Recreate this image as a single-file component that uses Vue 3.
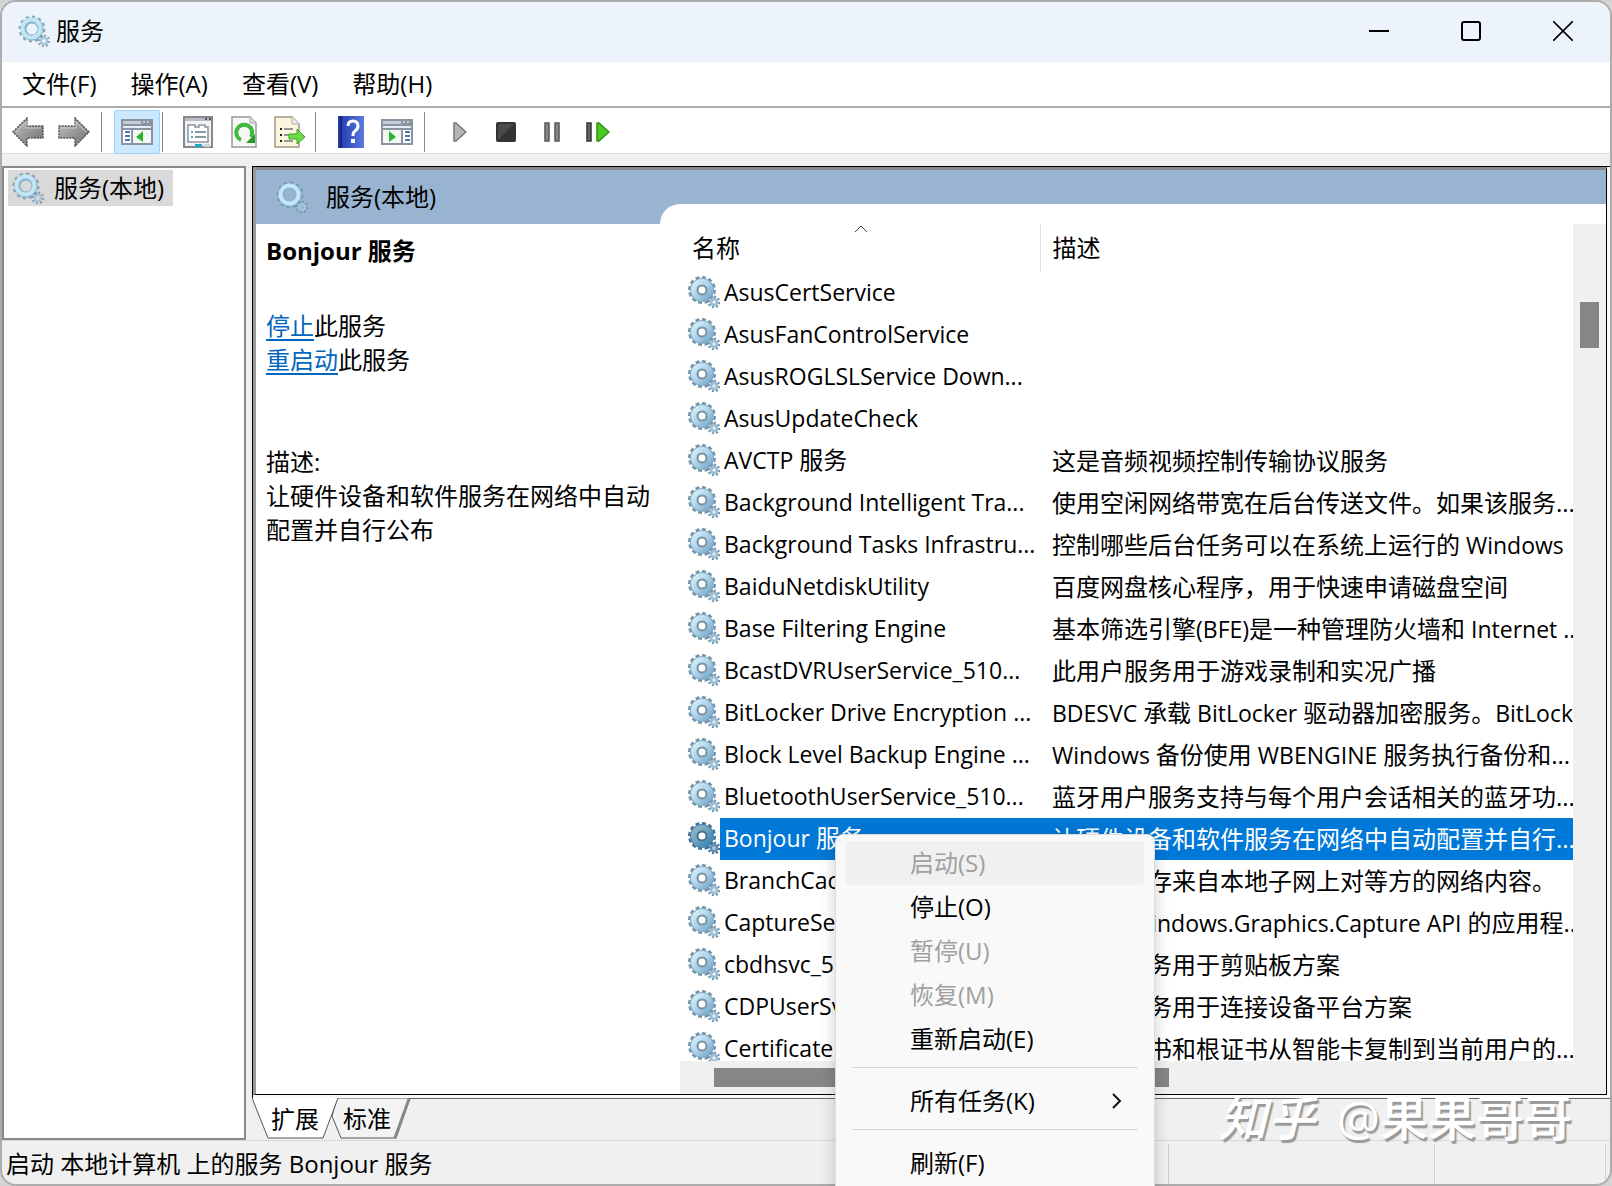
<script setup>
import { ref } from 'vue'

const menus = ['文件(F)', '操作(A)', '查看(V)', '帮助(H)']

const services = [
  { name: 'AsusCertService', desc: '' },
  { name: 'AsusFanControlService', desc: '' },
  { name: 'AsusROGLSLService Down...', desc: '' },
  { name: 'AsusUpdateCheck', desc: '' },
  { name: 'AVCTP 服务', desc: '这是音频视频控制传输协议服务' },
  { name: 'Background Intelligent Tra...', desc: '使用空闲网络带宽在后台传送文件。如果该服务...' },
  { name: 'Background Tasks Infrastru...', desc: '控制哪些后台任务可以在系统上运行的 Windows' },
  { name: 'BaiduNetdiskUtility', desc: '百度网盘核心程序，用于快速申请磁盘空间' },
  { name: 'Base Filtering Engine', desc: '基本筛选引擎(BFE)是一种管理防火墙和 Internet ...' },
  { name: 'BcastDVRUserService_510...', desc: '此用户服务用于游戏录制和实况广播' },
  { name: 'BitLocker Drive Encryption ...', desc: 'BDESVC 承载 BitLocker 驱动器加密服务。BitLocker' },
  { name: 'Block Level Backup Engine ...', desc: 'Windows 备份使用 WBENGINE 服务执行备份和...' },
  { name: 'BluetoothUserService_510...', desc: '蓝牙用户服务支持与每个用户会话相关的蓝牙功...' },
  { name: 'Bonjour 服务', desc: '让硬件设备和软件服务在网络中自动配置并自行...' },
  { name: 'BranchCache', desc: '此服务缓存来自本地子网上对等方的网络内容。' },
  { name: 'CaptureService_510...', desc: '为调用 Windows.Graphics.Capture API 的应用程...' },
  { name: 'cbdhsvc_510...', desc: '此用户服务用于剪贴板方案' },
  { name: 'CDPUserSvc_510...', desc: '此用户服务用于连接设备平台方案' },
  { name: 'Certificate Propagation', desc: '将用户证书和根证书从智能卡复制到当前用户的...' },
]
const selected = ref('Bonjour 服务')

// Splits a label into Latin and Chinese runs; Latin runs are set slightly smaller.
const runs = (text) =>
  (text.match(/[\x20-\x7e]+|[^\x20-\x7e]+/g) || []).map((t) => ({ t, latin: /[A-Za-z]/.test(t) }))

const contextMenu = [
  { label: '启动(S)', disabled: true, hover: true },
  { label: '停止(O)' },
  { label: '暂停(U)', disabled: true },
  { label: '恢复(M)', disabled: true },
  { label: '重新启动(E)' },
  { separator: true },
  { label: '所有任务(K)', submenu: true },
  { separator: true },
  { label: '刷新(F)' },
]
</script>

<template>
  <div class="desktop">
    <svg class="defs" aria-hidden="true">
      <defs>
        <linearGradient id="metal" x1="0" y1="0" x2="1" y2="1">
          <stop offset="0" stop-color="#c4c4c4" />
          <stop offset="1" stop-color="#6e6e6e" />
        </linearGradient>
        <linearGradient id="gearFill" x1="0" y1="0" x2="1" y2="1">
          <stop offset="0" stop-color="#d4edf9" />
          <stop offset="0.5" stop-color="#add2e9" />
          <stop offset="1" stop-color="#79abcc" />
        </linearGradient>
        <linearGradient id="helpFill" x1="0" y1="0" x2="1" y2="0">
          <stop offset="0" stop-color="#2238a0" />
          <stop offset="0.2" stop-color="#2a45b8" />
          <stop offset="1" stop-color="#5d7be0" />
        </linearGradient>
        <symbol id="gear" viewBox="0 0 32 32">
          <circle class="teeth" cx="14" cy="14" r="12" fill="none" stroke-width="4" pathLength="24" stroke-dasharray="1.200 .8" />
          <circle cx="14" cy="14" r="8" fill="none" stroke="#86a9c0" stroke-width="8" />
          <circle cx="14" cy="14" r="8" fill="none" stroke="url(#gearFill)" stroke-width="6" />
          <circle class="rim" cx="14" cy="14" r="4.500" fill="none" stroke-width="2" />
          <circle class="teeth" cx="26" cy="26" r="4.500" fill="none" stroke-width="4" pathLength="16" stroke-dasharray="1 1" />
          <circle cx="26" cy="26" r="3" fill="none" stroke="#9dbfd6" stroke-width="3" />
          <circle cx="26" cy="26" r="1" fill="#e3eef5" />
        </symbol>
        <symbol id="gear-light" viewBox="0 0 32 32">
          <circle class="teeth" cx="14" cy="14" r="12" fill="none" stroke-width="3" pathLength="24" stroke-dasharray="1 1" opacity=".8" />
          <circle cx="14" cy="14" r="8.500" fill="none" stroke="#86b3cf" stroke-width="6" />
          <circle cx="13.500" cy="13.500" r="9" fill="none" stroke="#c3e6f5" stroke-width="4" />
          <circle class="teeth" cx="26" cy="26" r="4.500" fill="none" stroke-width="4" pathLength="16" stroke-dasharray="1 1" opacity=".8" />
          <circle cx="26" cy="26" r="3" fill="none" stroke="#a5c5d8" stroke-width="2" />
        </symbol>
        <symbol id="console" viewBox="0 0 32 26">
          <path d="M0 0h32v26H0z" fill="#8a94a0" />
          <path d="M2 2h18v3H2zM22 2h2v2h-2zM26 2h2v2h-2z" fill="#c5cdd8" />
          <path d="M2 7h28v2H2z" fill="#e6edf4" />
          <path d="M2 11h8v13H2z" fill="#fff" />
          <path d="M12 11h18v13H12z" fill="#f4f8f4" />
          <path d="M4 12h5v2H4zM4 16h5v2H4zM4 20h5v2H4z" fill="#4a78b4" />
        </symbol>
      </defs>
    </svg>

    <main class="window">
      <header class="titlebar">
        <svg class="gear-icon"><use href="#gear-light" /></svg>
        <h1>服务</h1>
        <div class="captions">
          <button aria-label="最小化"><svg width="20" height="20"><path d="M0 10h20" stroke="#000" stroke-width="2" /></svg></button>
          <button aria-label="最大化"><svg width="20" height="20"><rect x="1" y="1" width="18" height="18" rx="2" fill="none" stroke="#000" stroke-width="2" /></svg></button>
          <button aria-label="关闭"><svg width="20" height="20"><path d="M0 0l20 20M20 0L0 20" stroke="#000" stroke-width="1.6" /></svg></button>
        </div>
      </header>

      <nav class="menubar">
        <button v-for="m in menus" :key="m">{{ m }}</button>
      </nav>

      <div class="toolbar" role="toolbar">
        <div class="group nav">
          <button aria-label="后退">
            <svg width="32" height="30" viewBox="0 0 32 30"><path d="M1 15L15 1v8h16v12H15v8z" fill="url(#metal)" stroke="#555" stroke-width="1.5" stroke-dasharray="2 1" /><path d="M4 15L14 5v6h15" fill="none" stroke="#ccc" /></svg>
          </button>
          <button aria-label="前进">
            <svg width="32" height="30" viewBox="0 0 32 30"><path d="M31 15L17 1v8H1v12h16v8z" fill="url(#metal)" stroke="#555" stroke-width="1.5" stroke-dasharray="2 1" /><path d="M3 11h15V5l10 10" fill="none" stroke="#ccc" /></svg>
          </button>
        </div>
        <div class="group">
          <button class="pressed" aria-label="显示/隐藏控制台树">
            <svg width="32" height="26" viewBox="0 0 32 26"><use href="#console" /><path d="M22 12v11l-7-5z" fill="#2fb52b" /></svg>
          </button>
        </div>
        <div class="group">
          <button aria-label="属性">
            <svg width="30" height="32" viewBox="0 0 30 32">
              <path d="M1 1h28v30H1z" fill="#f2f3f5" stroke="#858990" stroke-width="2" />
              <path d="M2 2h26v3H2z" fill="#b9bcc2" /><path d="M22 2h2v2h-2zM26 2h2v2h-2z" fill="#555" />
              <path d="M5 11V9h7v2h4V9h6v2h3v15H5z" fill="#fff" stroke="#8b939e" stroke-width="1.5" />
              <path d="M8 16h2M8 21h2" stroke="#35b5c8" stroke-width="2" /><path d="M12 16h11M12 21h11" stroke="#8e979f" stroke-width="2" />
              <path d="M12 28h7v3h-7z" fill="#27a9c4" /><path d="M21 28h6v3h-6z" fill="#cfd5da" />
            </svg>
          </button>
          <button aria-label="刷新">
            <svg width="26" height="32" viewBox="0 0 26 32">
              <path d="M1 1h18l6 6v24H1z" fill="#f7f7f7" stroke="#999" stroke-width="1.5" /><path d="M19 1v6h6" fill="#ddd" stroke="#aaa" />
              <path d="M10 24a8 8 0 1 1 10-3" fill="none" stroke="#3dba3a" stroke-width="4" /><path d="M24 18v9h-9z" fill="#259f28" />
            </svg>
          </button>
          <button aria-label="导出列表">
            <svg width="32" height="32" viewBox="0 0 32 32">
              <path d="M1 1h17l7 7v23H1z" fill="#fdf6df" stroke="#9c9888" stroke-width="1.5" /><path d="M18 1v7h7" fill="#eee" stroke="#aaa" />
              <path d="M6 13h2M6 19h2M6 25h2" stroke="#222" stroke-width="2" /><path d="M10 13h9M10 19h7M10 25h9" stroke="#777" stroke-width="1.5" />
              <path d="M15 18h8v-5l8 8-8 7v-5h-8z" fill="#6cdc48" stroke="#37a62a" />
            </svg>
          </button>
        </div>
        <div class="group">
          <button aria-label="帮助">
            <svg width="26" height="32" viewBox="0 0 26 32">
              <path d="M0 0h26v32H0z" fill="url(#helpFill)" /><path d="M3 0v32" stroke="#16287e" stroke-width="2" />
              <path d="M10 10q0-5 5-5t5 5q0 3-3 5-2 1-2 5" fill="none" stroke="#fff" stroke-width="3" /><path d="M13 23h4v4h-4z" fill="#fff" />
            </svg>
          </button>
          <button aria-label="显示/隐藏操作窗格">
            <svg width="32" height="26" viewBox="0 0 32 26">
              <use href="#console" /><path d="M2 11h18v13H2z" fill="#f4f8f4" /><path d="M20 11h2v13h-2z" fill="#8a94a0" /><path d="M22 11h8v13h-8z" fill="#fff" />
              <path d="M24 12h5v2h-5zM24 16h5v2h-5zM24 20h5v2h-5z" fill="#4a78b4" /><path d="M8 12v11l7-5z" fill="#2fb52b" />
            </svg>
          </button>
        </div>
        <div class="group run">
          <button aria-label="启动服务"><svg width="14" height="20"><path d="M1 1v18h2l10-9L3 1z" fill="#b5b5b5" stroke="#777" stroke-width="1.5" /></svg></button>
          <button aria-label="停止服务"><svg width="20" height="20"><rect width="20" height="20" rx="2" fill="#333" /><path d="M2 2h16L2 18z" fill="#4a4a4a" /></svg></button>
          <button aria-label="暂停服务"><svg width="16" height="20"><path d="M1 1h4v18H1zM11 1h4v18h-4z" fill="#888" stroke="#555" stroke-width="1.5" /></svg></button>
          <button aria-label="重启服务"><svg width="24" height="20"><path d="M1 1h4v18H1z" fill="#666" stroke="#333" stroke-width="1.5" /><path d="M11 1v18h2l10-9-10-9z" fill="#49c81f" stroke="#2b9412" stroke-width="1.5" /></svg></button>
        </div>
      </div>

      <div class="body">
        <aside class="tree">
          <button class="node">
            <svg class="gear-icon"><use href="#gear-light" /></svg>
            <span>服务(本地)</span>
          </button>
        </aside>

        <section class="result">
          <div class="frame">
            <div class="view">
              <div class="extended">
                <div class="banner">
                  <svg class="gear-icon"><use href="#gear-light" /></svg>
                  <span>服务(本地)</span>
                </div>
                <div class="details">
                  <h2>Bonjour 服务</h2>
                  <p class="actions"><a href="#stop">停止</a>此服务<br /><a href="#restart">重启动</a>此服务</p>
                  <p>描述:<br />让硬件设备和软件服务在网络中自动配置并自行公布</p>
                </div>
              </div>

              <div class="listview">
                <div class="rows">
                  <table>
                    <thead>
                      <tr>
                        <th class="name" scope="col">
                          名称
                          <svg class="sort" width="14" height="8"><path d="M1 7l6-6 6 6" fill="none" stroke="#444" /></svg>
                        </th>
                        <th scope="col">描述</th>
                      </tr>
                    </thead>
                    <tbody>
                      <tr v-for="s in services" :key="s.name" :class="{ selected: s.name === selected }" @click="selected = s.name">
                        <td class="name">
                          <div class="cell">
                            <svg class="gear-icon"><use href="#gear" /></svg>
                            <div class="label"><span v-for="(r, i) in runs(s.name)" :key="i" :class="{ latin: r.latin }">{{ r.t }}</span></div>
                          </div>
                        </td>
                        <td class="desc"><span v-for="(r, i) in runs(s.desc)" :key="i" :class="{ latin: r.latin }">{{ r.t }}</span></td>
                      </tr>
                    </tbody>
                  </table>
                </div>
                <div class="vscroll"><i></i></div>
                <div class="hscroll"><i></i></div>
              </div>
            </div>
          </div>

          <div class="tabs">
            <svg class="tab-shapes" width="160" height="42" aria-hidden="true">
              <path d="M85 0h73l-14 40H89L80 18z" fill="#f3f3f3" stroke="#555" />
              <path d="M157 1l-14 39" stroke="#888" stroke-width="3" />
              <path d="M0 0h86L71 40H16L0 0" fill="#fff" />
              <path d="M86 0L71 40H16L0 0" fill="none" stroke="#555" />
            </svg>
            <button>扩展</button>
            <button>标准</button>
          </div>
        </section>
      </div>

      <footer class="statusbar">
        <span class="message">启动 本地计算机 上的服务 Bonjour 服务</span>
        <span class="part"></span>
        <span class="part"></span>
      </footer>
    </main>

    <div class="context" role="menu">
      <template v-for="(c, i) in contextMenu" :key="i">
        <hr v-if="c.separator" />
        <button v-else role="menuitem" :disabled="c.disabled" :class="{ hover: c.hover }">
          <span>{{ c.label }}</span>
          <svg v-if="c.submenu" width="10" height="16"><path d="M1 1l7 7-7 7" fill="none" stroke="#111" stroke-width="2" /></svg>
        </button>
      </template>
    </div>

    <div class="watermark"><em>知乎</em><span>@果果哥哥</span></div>
  </div>
</template>

<style>
body {
  margin: 0;
  background: #a9a9a9;
}
</style>

<style scoped>
.desktop {
  position: relative;
  height: 100vh;
  overflow: hidden;
  background: #d4d4d4;
  font: 24px/34px 'Open Sans', 'Noto Sans CJK SC', sans-serif;
  color: #000;
}
.desktop *,
.desktop {
  box-sizing: border-box;
}
.defs {
  position: absolute;
  width: 0;
  height: 0;
}
button {
  padding: 0;
  border: 0;
  background: none;
  font: inherit;
  color: inherit;
}
h1,
h2,
p {
  margin: 0;
  font-size: 24px;
  font-weight: 400;
}
.window {
  display: flex;
  flex-direction: column;
  height: 100%;
  overflow: hidden;
  border: 2px solid #acacac;
  border-radius: 16px;
  background: #f0f0f0;
}
.gear-icon {
  flex: none;
  width: 32px;
  height: 32px;
}
.teeth {
  stroke: #7394aa;
}
.rim {
  stroke: #7792a3;
}

.titlebar {
  display: flex;
  flex: none;
  align-items: center;
  height: 60px;
  padding: 0 1px 2px 16px;
  gap: 6px;
  background: #edf3fa;
}
.captions {
  display: flex;
  margin-left: auto;
}
.captions button {
  display: grid;
  place-items: center;
  width: 92px;
  height: 56px;
}

.menubar {
  display: flex;
  flex: none;
  height: 46px;
  padding-left: 20px;
  gap: 34px;
  border-bottom: 2px solid #adadad;
  background: #fff;
}

.toolbar {
  display: flex;
  flex: none;
  height: 46px;
  padding-left: 3px;
  border-bottom: 1px solid #dadada;
  background: #fff;
}
.group {
  display: flex;
  padding: 2px 2px 0 12px;
}
.group.nav {
  padding: 2px 4px 0 0;
}
.group.run {
  padding-left: 14px;
}
.group + .group::before {
  content: '';
  align-self: flex-start;
  width: 1px;
  height: 40px;
  margin: 2px 12px 0 -12px;
  background: #8a8a8a;
}
.toolbar button {
  display: grid;
  place-items: center;
  width: 46px;
  height: 44px;
}
.toolbar .pressed {
  border: 1px solid #99d1ff;
  border-radius: 2px;
  background: #cce8ff;
}

.body {
  display: flex;
  flex: 1;
  min-height: 0;
  padding-top: 12px;
  gap: 6px;
}
.tree {
  flex: none;
  width: 244px;
  border: 2px solid #87898c;
  background: #fff;
  padding: 2px 4px;
}
.node {
  display: flex;
  align-items: center;
  height: 36px;
  padding: 0 9px 0 4px;
  gap: 10px;
  background: #d9d9d9;
}

.result {
  display: flex;
  flex: 1;
  flex-direction: column;
  min-width: 0;
}
.frame {
  display: flex;
  flex: 1;
  min-height: 0;
  padding: 0 3px 3px 0;
  border-top: 1px solid #000;
  border-left: 1px solid #000;
  background: #f8f8f8;
}
.view {
  display: flex;
  flex: 1;
  min-width: 0;
  border: 1px solid #000;
  border-top: 3px solid #85898f;
  border-left: 3px solid #9b9b9b;
  background: linear-gradient(#99b4d1 54px, #fff 54px);
}
.extended {
  flex: none;
  width: 404px;
}
.banner {
  display: flex;
  align-items: center;
  height: 54px;
  padding-left: 20px;
  gap: 18px;
}
.details {
  padding: 10px 8px 0 10px;
}
.details h2 {
  margin-bottom: 41px;
  font-weight: 700;
}
.details .actions {
  margin-bottom: 68px;
}
.details a {
  color: #0066bf;
  text-underline-offset: 4px;
}

.listview {
  display: grid;
  flex: 1;
  grid-template: minmax(0, 1fr) 33px / minmax(0, 1fr) 33px;
  min-width: 0;
  margin-top: 34px;
  padding: 20px 0 0 20px;
  border-top-left-radius: 20px;
  background: #fff;
}
.rows {
  overflow: hidden;
}
table {
  width: 100%;
  table-layout: fixed;
  border-collapse: collapse;
}
th {
  position: relative;
  height: 48px;
  padding: 0 12px;
  font-weight: 400;
  text-align: left;
}
th.name {
  width: 360px;
  border-right: 1px solid #e0e0e0;
}
.sort {
  position: absolute;
  top: 1px;
  left: 174px;
}
td {
  height: 42px;
  padding: 0;
  overflow: hidden;
  line-height: 40px;
  white-space: pre;
}
td.desc {
  padding-left: 12px;
}
.latin {
  font-size: 23px;
}
.cell {
  display: flex;
  height: 42px;
  padding-left: 8px;
}
.cell .gear-icon {
  margin-top: 4px;
}
.label {
  flex: 1;
  overflow: hidden;
  padding-left: 4px;
}
.selected .label,
.selected .desc {
  background: #0078d7;
  color: #fff;
}
.selected .gear-icon {
  filter: saturate(2) brightness(.75);
}
.vscroll {
  grid-row: 1 / 3;
  grid-column: 2;
  padding: 78px 7px 0;
  background: #f0f0f0;
}
.vscroll i {
  display: block;
  height: 46px;
  background: #868686;
}
.hscroll {
  grid-row: 2;
  grid-column: 1;
  padding: 7px 0 0 34px;
  background: #f0f0f0;
}
.hscroll i {
  display: block;
  width: 53%;
  height: 19px;
  background: #868686;
}

.tabs {
  position: relative;
  display: flex;
  flex: none;
  height: 42px;
  padding-left: 19px;
  gap: 24px;
  border-top: 1px solid #666;
}
.tabs button {
  position: relative;
  height: 40px;
}
.tab-shapes {
  position: absolute;
  top: -1px;
  left: 0;
}

.statusbar {
  display: flex;
  flex: none;
  height: 44px;
  padding-right: 4px;
  border-top: 1px solid #d7d7d7;
}
.message {
  flex: 1;
  padding-left: 4px;
  line-height: 46px;
}
.part {
  width: 266px;
  margin-top: 3px;
  border-left: 1px solid #d0d0d0;
}
.part:last-child {
  width: 172px;
  border-right: 1px solid #d0d0d0;
}

.context {
  position: absolute;
  top: 834px;
  left: 835px;
  width: 320px;
  height: 400px;
  padding: 6px 10px;
  border: 1px solid #dcdcdc;
  border-radius: 8px;
  background: #f9f9f9;
  box-shadow: 0 4px 16px rgba(0, 0, 0, .2);
}
.context button {
  display: flex;
  align-items: center;
  justify-content: space-between;
  width: 100%;
  height: 44px;
  padding: 0 22px 0 64px;
  border-radius: 4px;
}
.context button:disabled {
  color: #a0a0a0;
}
.context .hover {
  background: #f0f0f0;
}
.context hr {
  height: 1px;
  margin: 6px 6px 11px;
  border: 0;
  background: #d6d6d6;
}

.watermark {
  position: absolute;
  right: 40px;
  bottom: 38px;
  display: flex;
  gap: 22px;
  font-size: 48px;
  font-weight: 500;
  line-height: 60px;
  color: #fff;
  text-shadow: 2px 3px 1px #999;
}
</style>
